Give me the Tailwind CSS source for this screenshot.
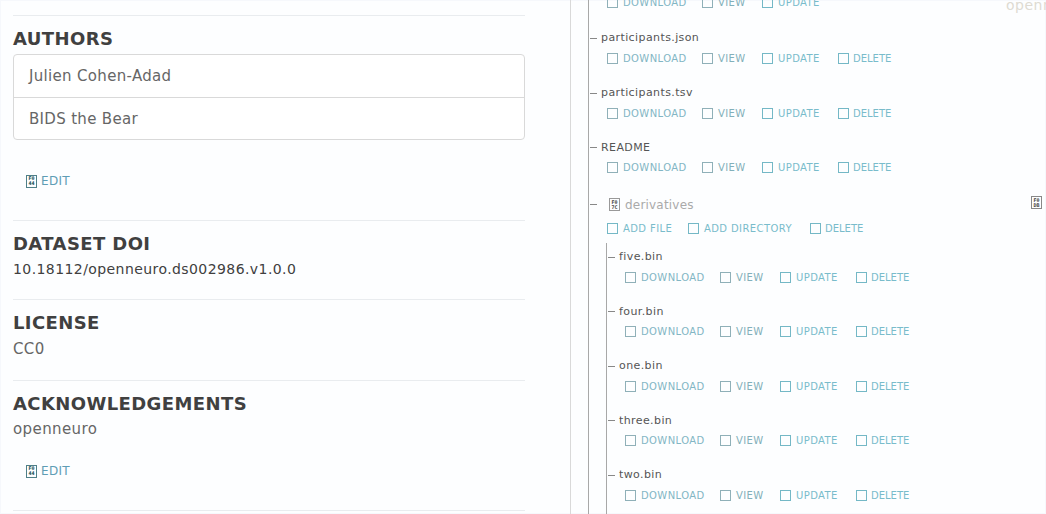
<!DOCTYPE html>
<html lang="en">
<head>
    <meta charset="UTF-8">
    <meta name="viewport" content="width=device-width, initial-scale=1.0">
    <title>Dataset</title>
    <script src="https://cdn.jsdelivr.net/npm/@tailwindcss/browser@4"></script>
</head>
<body class="h-[514px] overflow-hidden bg-[#fdfeff] font-['DejaVu_Sans',sans-serif] text-[#666]">
    <div class="relative flex h-[514px] overflow-hidden shadow-[inset_0_0_0_1px_#f6f8fc]">
        <!-- Left column -->
        <div class="w-[571px] shrink-0 border-r border-[#d9d9d9] pl-[13px] pr-[45px] pt-[15px]">
            <div class="border-t border-[#e9ecef] pt-[12px]">
                <h2 class="text-[18px] leading-[22px] font-bold tracking-[0.4px] text-[#404040]">AUTHORS</h2>
                <div class="mt-[4px] rounded border border-[#d9d9d9] bg-white text-[15px] tracking-[0.32px]">
                    <div class="flex h-[43px] items-center border-b border-[#d9d9d9] pl-[15px]">Julien Cohen-Adad</div>
                    <div class="flex h-[41px] items-center pt-[2px] pl-[15px]">BIDS the Bear</div>
                </div>
                <a class="mt-[33px] ml-[13px] flex h-[16px] items-center gap-[4px] text-[12px] tracking-[0.3px] text-[#5f9db5]">
                    <span class="flex h-[13px] w-[11px] flex-col items-center justify-center border border-[#4f8088] font-['DejaVu_Sans_Mono'] text-[5px] leading-[5px] font-bold tracking-normal text-[#0f4a52]"><span>F0</span><span>44</span></span>EDIT
                </a>
            </div>
            <div class="mt-[31px] border-t border-[#e9ecef] pt-[12px]">
                <h2 class="text-[18px] leading-[22px] font-bold tracking-[0.4px] text-[#404040]">DATASET DOI</h2>
                <p class="mt-[4px] text-[14px] leading-[20px] tracking-[0.42px] text-[#404040]">10.18112/openneuro.ds002986.v1.0.0</p>
            </div>
            <div class="mt-[20px] border-t border-[#e9ecef] pt-[12px]">
                <h2 class="text-[18px] leading-[22px] font-bold tracking-[0.4px] text-[#404040]">LICENSE</h2>
                <p class="mt-[5px] text-[15px] leading-[20px] tracking-[0.4px]">CC0</p>
            </div>
            <div class="mt-[21px] border-t border-[#e9ecef] pt-[12px]">
                <h2 class="text-[18px] leading-[22px] font-bold tracking-[0.4px] text-[#404040]">ACKNOWLEDGEMENTS</h2>
                <p class="mt-[4px] text-[15px] leading-[20px] tracking-[0.4px]">openneuro</p>
                <a class="mt-[24px] ml-[13px] flex h-[16px] items-center gap-[4px] text-[12px] tracking-[0.3px] text-[#5f9db5]">
                    <span class="flex h-[13px] w-[11px] flex-col items-center justify-center border border-[#4f8088] font-['DejaVu_Sans_Mono'] text-[5px] leading-[5px] font-bold tracking-normal text-[#0f4a52]"><span>F0</span><span>44</span></span>EDIT
                </a>
            </div>
            <div class="mt-[31px] border-t border-[#e9ecef]"></div>
        </div>

        <!-- File tree -->
        <div class="relative ml-[17px] flex-1 border-l border-[#a8a8a8]">
            <div id="tree" class="-mt-[10px] pl-[1px]"></div>
        </div>

        <span class="absolute top-[-5px] left-[1006px] text-[14px] tracking-[0.5px] text-[#dedbd2]">openn</span>
        <span class="absolute top-[196px] left-[1031px] flex h-[13px] w-[11px] flex-col items-center justify-center border border-[#888] font-['DejaVu_Sans_Mono'] text-[5px] leading-[5px] font-bold text-[#444]"><span>F0</span><span>DB</span></span>
    </div>

    <script>
        const actionClasses = {
            DOWNLOAD: 'w-[95px] gap-[5px] text-[#82b6c4]',
            VIEW: 'w-[60px] gap-[5px] text-[#82b0ba]',
            UPDATE: 'w-[76px] gap-[5px] text-[#79bccb]',
            DELETE: 'w-[70px] gap-[4px] tracking-normal text-[#79bccb]',
        };
        const boxClasses = {
            DOWNLOAD: 'border-[#8fb0b8]',
            VIEW: 'border-[#8fb0b8]',
            UPDATE: 'border-[#74b8c6]',
            DELETE: 'border-[#74b8c6]',
        };

        function actions(names) {
            return `<div class="mt-[5px] ml-[17px] flex h-[14px] items-center text-[10px] tracking-[0.4px]">` + names.map(n => `
                <span class="${actionClasses[n]} flex shrink-0 items-center"><span class="${boxClasses[n]} h-[11px] w-[11px] shrink-0 border"></span>${n}</span>`).join('') + `</div>`;
        }

        function fileRow(name) {
            return `
                <div class="h-[54.6px]">
                    <div class="flex h-[16px] items-center text-[11px] tracking-[0.4px] text-[#555]">
                        <span class="mr-[4px] h-px w-[7px] bg-[#888]"></span>${name}
                    </div>
                    ${actions(['DOWNLOAD', 'VIEW', 'UPDATE', 'DELETE'])}
                </div>`;
        }

        const addBox = `<span class="h-[11px] w-[11px] shrink-0 border border-[#74b8c6]"></span>`;
        const firstRow = `<div class="h-[35.7px]">${actions(['DOWNLOAD', 'VIEW', 'UPDATE'])}</div>`;
        const files = ['participants.json', 'participants.tsv', 'README'].map(fileRow).join('');
        const folder = `
            <div class="flex h-[16px] items-center text-[12px] tracking-[0.2px] text-[#aaa]">
                <span class="mr-[12px] h-px w-[7px] bg-[#888]"></span>
                <span class="mr-[5px] flex h-[13px] w-[11px] flex-col items-center justify-center border border-[#999] font-['DejaVu_Sans_Mono'] text-[5px] leading-[5px] font-bold tracking-normal text-[#444]"><span>F0</span><span>7C</span></span>derivatives
            </div>
            <div class="mt-[9px] ml-[17px] flex h-[14px] items-center text-[10px] tracking-[0.4px] text-[#79bccb]">
                <span class="flex w-[81px] shrink-0 items-center gap-[5px]">${addBox}ADD FILE</span>
                <span class="flex w-[122px] shrink-0 items-center gap-[5px]">${addBox}ADD DIRECTORY</span>
                <span class="flex items-center gap-[4px] tracking-normal">${addBox}DELETE</span>
            </div>`;
        const nested = ['five.bin', 'four.bin', 'one.bin', 'three.bin', 'two.bin'].map(fileRow).join('');

        document.getElementById('tree').innerHTML = firstRow + files + `<div class="mt-[2.3px]">${folder}</div>` +
            `<div class="mt-[7px] ml-[16px] h-[300px] border-l border-[#a8a8a8] pt-[6.4px] pl-[1px]">${nested}</div>`;
    </script>
</body>
</html>
